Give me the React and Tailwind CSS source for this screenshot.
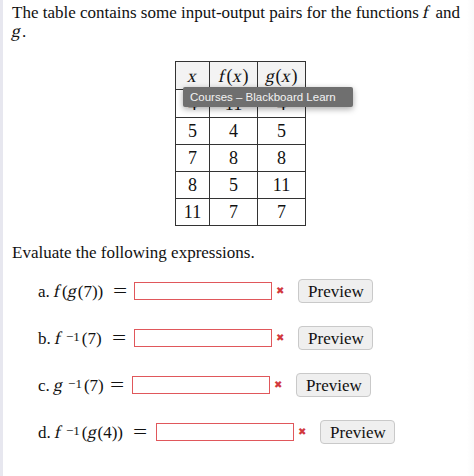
import React from "react";

const serif = { fontFamily: '"Liberation Serif", "Times New Roman", serif' };

function V({ children, pr = "pr-[1px]" }) {
  return (
    <span className={`inline-block not-italic text-[18px] -skew-x-12 ${pr}`}>{children}</span>
  );
}

function Sup({ children }) {
  return (
    <sup className="text-[13px] relative -top-[3px] ml-[4px] mr-[2px]">{children}</sup>
  );
}

function Row({ label, math, labelW, inputMl }) {
  return (
    <div className="flex items-center h-[24px]">
      <span className={`${labelW} flex justify-between whitespace-nowrap`}>
        <span>
          {label}&nbsp;{math}
        </span>
        <span className="inline-block text-[18px] scale-x-140 origin-right">=</span>
      </span>
      <span className={`${inputMl} inline-block w-[138px] h-[18px] border border-[#e0575b] bg-white`}></span>
      <span
        className="ml-[4px] text-[10px] text-[#d2393d] leading-none"
        style={{ fontFamily: '"DejaVu Sans", sans-serif' }}
      >
        ✖
      </span>
      <button className="ml-[14px] w-[75px] h-[24px] rounded-[4px] border border-[#c9c9c9] bg-[#efefef] text-[17px] text-[#111] leading-none">
        Preview
      </button>
    </div>
  );
}

export default function App() {
  const cell = "border border-[#333] text-center";
  return (
    <div
      className="w-[474px] h-[476px] flex bg-white text-[#111] text-[17px] overflow-hidden"
      style={serif}
    >
      <div className="w-[3px] shrink-0 bg-[#e7e7ef]"></div>
      <div className="flex-1 relative pl-[9px] pt-[3px] leading-[19px]">
        <p className="w-[455px]">
          The table contains some input-output pairs for the functions <V pr="pr-[2px]">f</V> and <V>g</V>.
        </p>
        <div className="mt-[20px] ml-[163px]">
          <table className="border-collapse text-[18px] leading-none">
            <thead>
              <tr className="h-[28px] bg-[#f3f3f3]">
                <th className={`${cell} w-[34px] font-normal`}>
                  <V>x</V>
                </th>
                <th className={`${cell} w-[48px] font-normal`}>
                  <V pr="pr-[2px]">f</V>(<V>x</V>)
                </th>
                <th className={`${cell} w-[48px] font-normal`}>
                  <V>g</V>(<V>x</V>)
                </th>
              </tr>
            </thead>
            <tbody>
              {[
                ["4", "11", "4"],
                ["5", "4", "5"],
                ["7", "8", "8"],
                ["8", "5", "11"],
                ["11", "7", "7"],
              ].map((r, i) => (
                <tr key={i} className={i === 0 ? "h-[28px]" : "h-[27px]"}>
                  {r.map((c, j) => (
                    <td key={j} className={cell}>
                      {c}
                    </td>
                  ))}
                </tr>
              ))}
            </tbody>
          </table>
        </div>
        <div
          className="absolute left-[180px] top-[87px] w-[170px] h-[20px] bg-[#6f6f6f] text-[#f2f2f2] text-[11.5px] leading-[20px] pl-[7px] shadow-[0_2px_6px_rgba(0,0,0,0.35)] rounded-[2px] whitespace-nowrap"
          style={{ fontFamily: '"Liberation Sans", Arial, sans-serif' }}
        >
          Courses – Blackboard Learn
        </div>
        <p className="mt-[17px]">Evaluate the following expressions.</p>
        <div className="ml-[26px] mt-[17px] flex flex-col gap-[23px]">
          <Row
            label="a."
            labelW="w-[89px]"
            inputMl="ml-[7px]"
            math={
              <>
                <V pr="pr-[2px]">f</V>(<V>g</V>(7))
              </>
            }
          />
          <Row
            label="b."
            labelW="w-[88px]"
            inputMl="ml-[8px]"
            math={
              <>
                <V>f</V>
                <Sup>−1</Sup>(7)
              </>
            }
          />
          <Row
            label="c."
            labelW="w-[86px]"
            inputMl="ml-[8px]"
            math={
              <>
                <V>g</V>
                <Sup>−1</Sup>(7)
              </>
            }
          />
          <Row
            label="d."
            labelW="w-[109px]"
            inputMl="ml-[9px]"
            math={
              <>
                <V>f</V>
                <Sup>−1</Sup>(<V>g</V>(4))
              </>
            }
          />
        </div>
      </div>
      <div className="w-[18px] shrink-0 bg-gradient-to-r from-white to-[#f1f1f1]"></div>
    </div>
  );
}
